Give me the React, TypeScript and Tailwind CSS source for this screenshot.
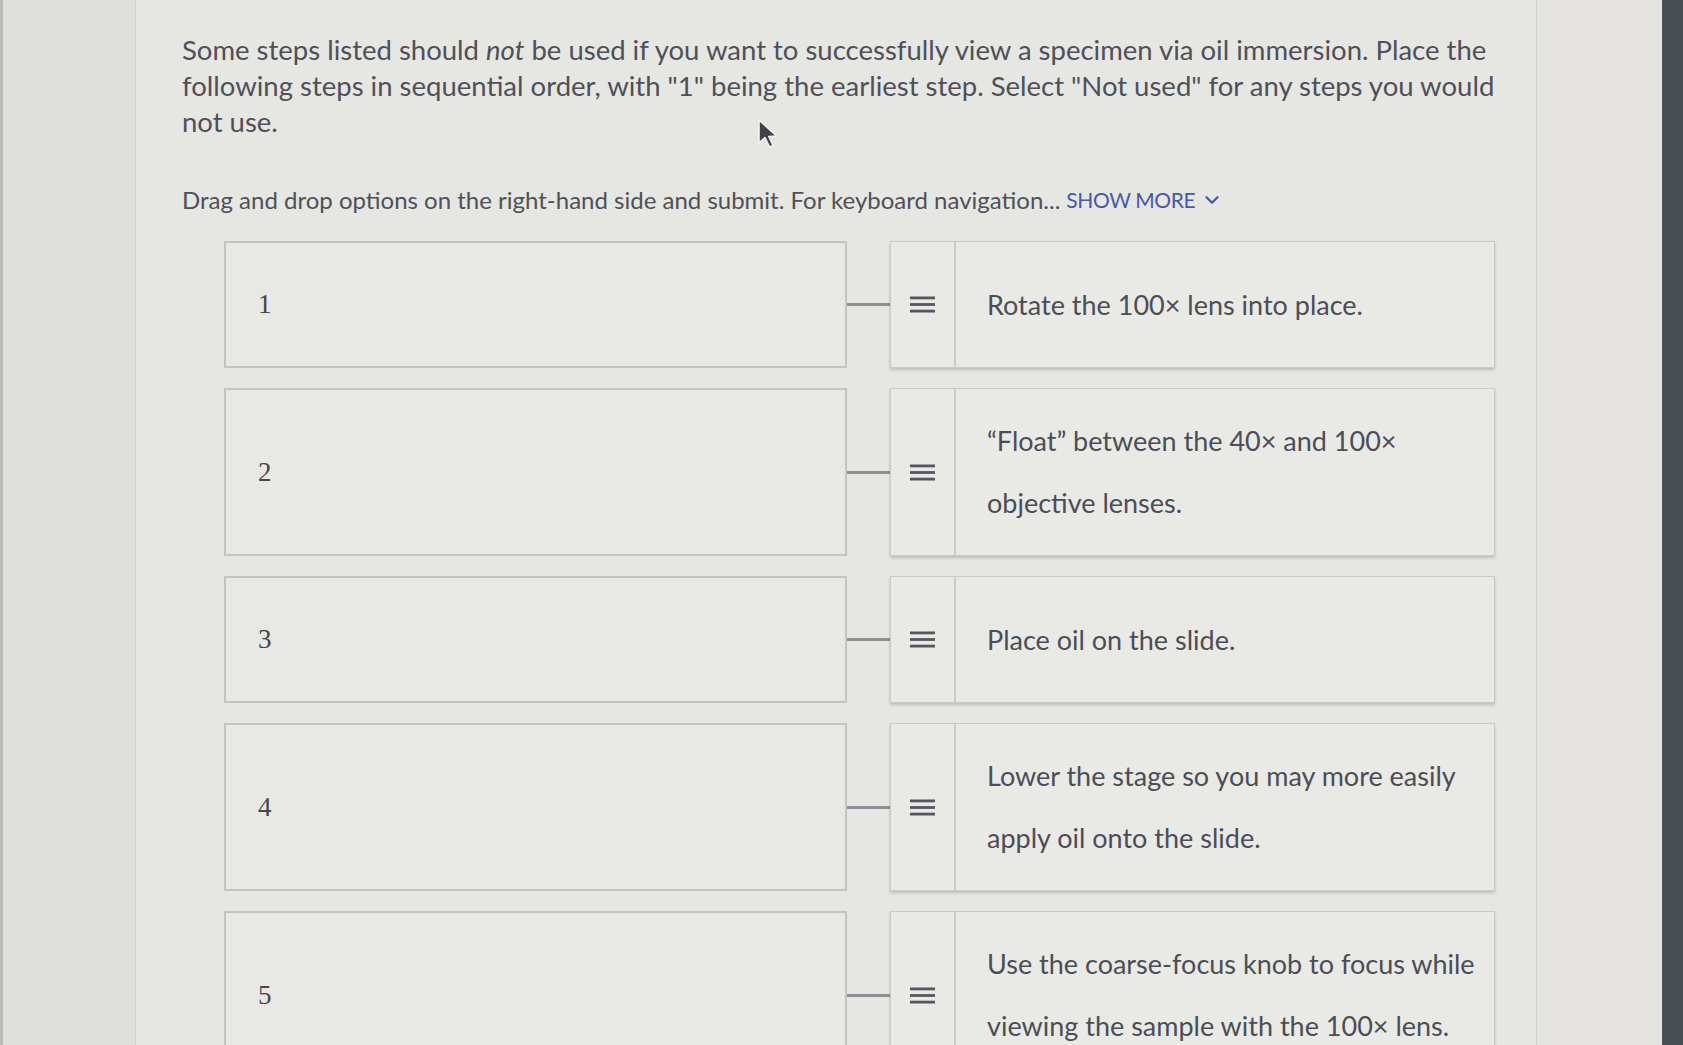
import { ChevronDown } from "lucide-react";

const rows = [
  { n: 1, h: "h-[127px]", lines: ["Rotate the 100× lens into place."] },
  { n: 2, h: "h-[168px]", lines: ["“Float” between the 40× and 100×", "objective lenses."] },
  { n: 3, h: "h-[127px]", lines: ["Place oil on the slide."] },
  { n: 4, h: "h-[168px]", lines: ["Lower the stage so you may more easily", "apply oil onto the slide."] },
  { n: 5, h: "h-[168px]", lines: ["Use the coarse-focus knob to focus while", "viewing the sample with the 100× lens."] },
];

function Handle() {
  return (
    <svg width="25" height="17" viewBox="0 0 25 17" className="text-[#55565f]">
      <rect x="0" y="0.5" width="25" height="2.8" fill="currentColor" />
      <rect x="0" y="7.1" width="25" height="2.8" fill="currentColor" />
      <rect x="0" y="13.7" width="25" height="2.8" fill="currentColor" />
    </svg>
  );
}

function Cursor() {
  return (
    <svg width="24" height="32" viewBox="0 0 24 32" className="absolute left-[756px] top-[118px]">
      <path d="M3 2 L3 25 L9 19.5 L13.5 29 L17 27.5 L12.8 18.5 L20.5 18 Z" fill="#3f4347" stroke="#f4f4f2" strokeWidth="1.6" strokeLinejoin="round" />
    </svg>
  );
}

export default function App() {
  return (
    <div className="relative flex h-[1045px] w-full overflow-hidden bg-[#e3e3e0] font-['Lato','Liberation_Sans',sans-serif] text-[#4f5058]">
      {/* left gutter */}
      <div className="h-full w-[135px] shrink-0 border-l-[3px] border-[#b9b9b6] bg-[#dededb]" />

      {/* question panel */}
      <div className="h-full w-[1402px] shrink-0 border-x border-[#cfcfcc] bg-[#e6e6e3] pl-[46px] pt-[32px]">
        <p className="whitespace-nowrap text-[27.5px] leading-[36px]">
          Some steps listed should <em>not</em> be used if you want to successfully view a specimen via oil immersion. Place the
          <br />
          following steps in sequential order, with "1" being the earliest step. Select "Not used" for any steps you would
          <br />
          not use.
        </p>

        <div className="mt-[45px] flex items-center text-[24px] leading-[30px]">
          <span>Drag and drop options on the right-hand side and submit. For keyboard navigation...</span>
          <span className="ml-[6px] flex items-center gap-[6px] text-[21px] tracking-[-0.4px] text-[#4858a8]">
            SHOW MORE
            <ChevronDown className="h-[22px] w-[22px]" strokeWidth={2.5} />
          </span>
        </div>

        <div className="ml-[42px] mt-[26px] flex flex-col gap-5">
          {rows.map((r) => (
            <div key={r.n} className={`flex items-center ${r.h}`}>
              <div className="flex h-full w-[623px] items-center border-2 border-[#c3c3c0] bg-[#e8e8e5] pl-[32px] font-['Liberation_Serif',serif] text-[27px] text-[#45464c]">
                {r.n}
              </div>
              <div className="h-[3px] w-[43px] bg-[#8f9095]" />
              <div className="flex h-full w-[605px] border border-[#c9c9c6] bg-[#e9e9e6] shadow-[0_2px_3px_rgba(0,0,0,0.18)]">
                <div className="flex w-[65px] shrink-0 items-center justify-center border-r-2 border-[#cbcbc8]">
                  <Handle />
                </div>
                <div className="flex flex-col justify-center pl-[31px] text-[27px] leading-[62px] text-[#4c4d56]">
                  {r.lines.map((l) => (
                    <span key={l}>{l}</span>
                  ))}
                </div>
              </div>
            </div>
          ))}
        </div>
      </div>

      {/* right margin */}
      <div className="h-full w-[125px] shrink-0 bg-[#e4e3df]" />
      <div className="h-full flex-1 bg-[#4a4f55]" />

      <Cursor />
    </div>
  );
}
